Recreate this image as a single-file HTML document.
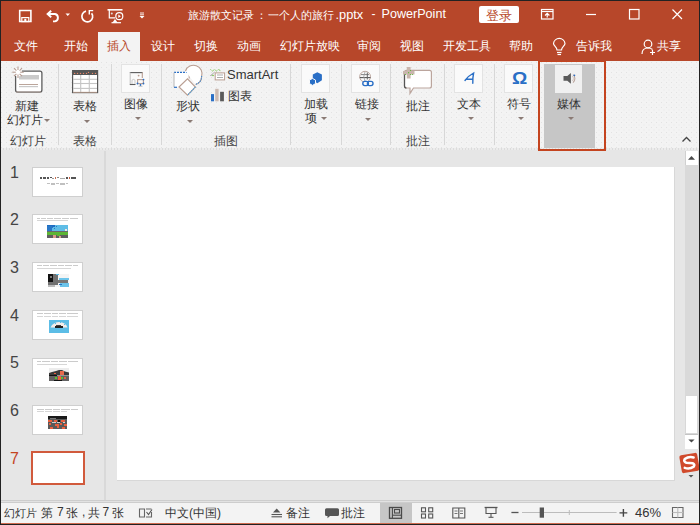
<!DOCTYPE html>
<html><head><meta charset="utf-8">
<style>
*{margin:0;padding:0;box-sizing:border-box}
html,body{width:700px;height:525px;overflow:hidden}
body{position:relative;background:#e6e6e6;font-family:"Liberation Sans",sans-serif;color:#444;font-size:12px}
.a{position:absolute}
#title{left:0;top:0;width:700px;height:61px;background:#b7472a}
#ribbon{left:0;top:61px;width:700px;height:87px;background-color:#f3f3f3;background-image:radial-gradient(circle at 1.5px 1.5px,#e2e2e2 0.6px,transparent 1px),radial-gradient(circle at 1.5px 1.5px,#e6e6e6 0.6px,transparent 1px);background-size:5px 5px,5px 5px;background-position:0 0,2.5px 2.5px}
#rbot{left:0;top:148px;width:700px;height:2px;background:repeating-linear-gradient(90deg,#dcdcdc 0 1.5px,#ececec 1.5px 3px)}
.t{color:#fff;font-size:12px;white-space:nowrap}
.tab{color:#fff;font-size:12px;top:38px;white-space:nowrap}
.sep{width:1px;background:#d7d7d7;top:64px;height:81px}
.ib{background:#fafafa;border:1px solid #e3e3e3;width:29px;height:29px;top:64px}
.lbl{font-size:12px;color:#333;white-space:nowrap}
.glbl{font-size:12px;color:#444;white-space:nowrap;top:132.5px}
.dd{width:0;height:0;border-left:3px solid transparent;border-right:3px solid transparent;border-top:3px solid #8a7a74}
#frameL{left:0;top:0;width:1px;height:525px;background:#222}
#frameR{left:699px;top:0;width:1px;height:525px;background:#222}
#frameT{left:0;top:0;width:700px;height:1px;background:#222}
#frameB{left:0;top:524px;width:700px;height:1px;background:#222}
#panel{left:0;top:151px;width:104px;height:351px;background:#e6e6e6}
#psep{left:104px;top:151px;width:2px;height:349px;background:#d9d9d9}
.thumb{left:32px;width:51px;height:30px;background:#fff;border:1px solid #cfcfcf}
.num{left:10px;font-size:16px;color:#444}
#slide{left:117px;top:167px;width:558px;height:314px;background:#fff;border-right:1px solid #d8d8d8;border-bottom:1px solid #d8d8d8}
#status{left:0;top:502px;width:700px;height:23px;background:#f3f3f3;border-top:1px solid #c6c6c6}
#obot{left:0;top:523px;width:700px;height:1px;background:#cf6a4e}
.st{font-size:12px;color:#333;top:505px;white-space:nowrap}
</style></head><body>
<div id="title" class="a"></div>
<div id="ribbon" class="a"></div>
<div id="rbot" class="a"></div>

<svg class="a" style="left:0;top:0" width="700" height="61" viewBox="0 0 700 61">
<g fill="none" stroke="#fff" stroke-width="1.2">
<!-- save -->
<path d="M19.7 10.5 H30.9 V21.5 H19.7 Z" stroke-width="1.6"/>
<rect x="21.8" y="17.6" width="7" height="4" stroke-width="1.2"/>
<rect x="24.3" y="18.8" width="2" height="2.2" fill="#fff" stroke="none"/>
<!-- undo -->
<path d="M48 14 H55 A3.8 3.8 0 0 1 55 21.4 H53" stroke-width="1.9"/>
<path d="M51.2 10.8 L47.6 14 L51.2 17.2" stroke-width="1.9"/>
<!-- repeat -->
<path d="M86 11.2 A5.4 5.4 0 1 0 91.6 13.2" stroke-width="1.7"/>
<path d="M89.3 14.5 V10.6 H93.2" stroke-width="1.4"/>
<!-- presentation -->
<line x1="107.5" y1="9.8" x2="122.5" y2="9.8" stroke-width="1.6"/>
<path d="M109.3 10 V17.8 H115"/>
<circle cx="119.3" cy="16.2" r="3.5"/>
<path d="M118.3 14.5 L120.8 16.2 L118.3 17.9 Z" fill="#fff" stroke="none"/>
<path d="M112.3 22.8 L115 19 L117.7 22.8 Z" fill="#fff" stroke="none"/>
<line x1="111.5" y1="22.7" x2="121" y2="22.7"/>
<circle cx="111.8" cy="13.5" r="1" fill="#ddd" stroke="none"/>
<!-- ribbon opts -->
<rect x="541.5" y="9.5" width="11.5" height="9.5"/>
<line x1="541.5" y1="11.5" x2="553" y2="11.5"/>
<path d="M547.2 17.5 V13.5 M545 15.5 L547.2 13.3 L549.4 15.5" />
<!-- minimize -->
<line x1="586" y1="14.5" x2="596" y2="14.5"/>
<!-- maximize -->
<rect x="629.5" y="9.5" width="9.5" height="9.5"/>
<!-- close -->
<path d="M672.5 9.5 L682 19 M682 9.5 L672.5 19"/>
<!-- bulb -->
<path d="M557 50 C557 47 553.5 46 553.5 43.5 A5.8 5.8 0 0 1 565 43.5 C565 46 561.5 47 561.5 50 Z"/>
<line x1="557" y1="52.5" x2="561.5" y2="52.5"/>
<line x1="557.5" y1="54.5" x2="561" y2="54.5"/>
<!-- person -->
<circle cx="648" cy="44" r="3.8"/>
<path d="M642 54 C642 50 644.5 48 648 48 C650 48 651.5 48.5 652.5 49.5"/>
<path d="M652.5 50 V55 M650 52.5 H655"/>
</g>
<path d="M65.5 13.6 H70 L67.75 16 Z" fill="#fff"/>
<path d="M140 13 H144 M140 14.8 H144" stroke="#fff" stroke-width="0.9"/>
<path d="M139.5 16 H144.5 L142 18.5 Z" fill="#fff"/>
</svg>
<!-- title text -->
<div class="a t" style="left:188px;top:8px;font-size:11.4px">旅游散文记录</div>
<div class="a t" style="left:256px;top:8px;font-size:11.2px">：</div>
<div class="a t" style="left:268px;top:8px;font-size:11.3px">一个人的旅行</div>
<div class="a t" style="left:335.5px;top:6.5px;font-size:12.8px">.pptx</div>
<div class="a t" style="left:371.5px;top:7px;font-size:12px">-</div>
<div class="a t" style="left:381.5px;top:6.5px;font-size:12.6px">PowerPoint</div>
<div class="a" style="left:479px;top:6px;width:40px;height:17px;background:#fff;border-radius:2px"></div>
<div class="a" style="left:486px;top:7px;color:#b7472a;font-size:13px">登录</div>

<!-- tabs -->
<div class="a tab" style="left:14px">文件</div>
<div class="a tab" style="left:64px">开始</div>
<div class="a" style="left:98px;top:32px;width:42px;height:29px;background:#f3f3f3"></div>
<div class="a tab" style="left:107px;color:#b7472a">插入</div>
<div class="a tab" style="left:151px">设计</div>
<div class="a tab" style="left:194px">切换</div>
<div class="a tab" style="left:237px">动画</div>
<div class="a tab" style="left:280px">幻灯片放映</div>
<div class="a tab" style="left:357px">审阅</div>
<div class="a tab" style="left:400px">视图</div>
<div class="a tab" style="left:443px">开发工具</div>
<div class="a tab" style="left:509px">帮助</div>
<div class="a tab" style="left:576px">告诉我</div>
<div class="a tab" style="left:657px">共享</div>

<!-- ribbon separators -->
<div class="a sep" style="left:58px"></div>
<div class="a sep" style="left:111px"></div>
<div class="a sep" style="left:161px"></div>
<div class="a sep" style="left:290px"></div>
<div class="a sep" style="left:341px"></div>
<div class="a sep" style="left:390px"></div>
<div class="a sep" style="left:444px"></div>
<div class="a sep" style="left:494px"></div>

<!-- media highlight -->
<div class="a" style="left:538px;top:61px;width:68px;height:90px;border:2.5px solid #c4441f;border-top:1.5px solid #c4441f"></div>
<div class="a" style="left:544px;top:64px;width:51px;height:84px;background:#c6c6c6"></div>

<!-- icon boxes -->
<div class="a ib" style="left:121px"></div>
<div class="a ib" style="left:301px"></div>
<div class="a ib" style="left:351px"></div>
<div class="a ib" style="left:454px"></div>
<div class="a ib" style="left:504px"></div>
<div class="a ib" style="left:555px;width:27px;top:64.5px;height:28px;background:#f0f0f0;border:none"></div>

<svg class="a" style="left:0;top:0" width="700" height="150" viewBox="0 0 700 150">
<!-- new slide -->
<rect x="15.6" y="71.1" width="26.3" height="21" rx="2" fill="#fff" stroke="#5c5c5c" stroke-width="1.3"/>
<rect x="19" y="75" width="20" height="4.5" fill="#cacaca"/>
<line x1="19" y1="84.5" x2="38" y2="84.5" stroke="#bba59b" stroke-width="1"/>
<line x1="19" y1="86.7" x2="38" y2="86.7" stroke="#bdbdbd" stroke-width="1"/>
<line x1="16" y1="92" x2="41" y2="92" stroke="#b9a59d" stroke-width="0.8"/>
<circle cx="18" cy="72.2" r="4.2" fill="#fff"/>
<g stroke="#b59b91" stroke-width="1.1">
<line x1="18" y1="66.5" x2="18" y2="70"/><line x1="18" y1="74.5" x2="18" y2="78"/>
<line x1="12.3" y1="72.2" x2="15.8" y2="72.2"/><line x1="20.2" y1="72.2" x2="23.7" y2="72.2"/>
<line x1="14" y1="68.2" x2="16.4" y2="70.6"/><line x1="19.6" y1="73.8" x2="22" y2="76.2"/>
<line x1="22" y1="68.2" x2="19.6" y2="70.6"/><line x1="16.4" y1="73.8" x2="14" y2="76.2"/>
</g>
<!-- table -->
<rect x="72.6" y="70.6" width="25" height="22" fill="#fff" stroke="#595959" stroke-width="1.2"/>
<rect x="72.6" y="70.2" width="25" height="4.8" fill="#565656"/>
<g fill="#e8876a"><circle cx="74.6" cy="73.4" r=".7"/><circle cx="77.5" cy="73.4" r=".7"/><circle cx="80.5" cy="73.4" r=".7"/><circle cx="83.5" cy="73.4" r=".7"/><circle cx="86.5" cy="73.4" r=".7"/><circle cx="88.5" cy="72.4" r=".7"/><circle cx="92.5" cy="73.4" r=".7"/><circle cx="95.5" cy="73.4" r=".7"/></g>
<g stroke="#c4c4c4" stroke-width="1.1"><line x1="80.7" y1="75" x2="80.7" y2="92"/><line x1="89.3" y1="75" x2="89.3" y2="92"/>
<line x1="73" y1="79.3" x2="97" y2="79.3"/><line x1="73" y1="83.5" x2="97" y2="83.5"/><line x1="73" y1="88.4" x2="97" y2="88.4"/></g>
<line x1="73" y1="92.3" x2="97" y2="92.3" stroke="#c9a999" stroke-width="0.8"/>
<!-- image -->
<g fill="none" stroke-width="1.1">
<line x1="129.8" y1="72.6" x2="142.6" y2="72.6" stroke="#5a5a5a"/>
<line x1="130.2" y1="72.6" x2="130.2" y2="84.4" stroke="#c4c4c4"/>
<line x1="129.8" y1="84.5" x2="135.5" y2="84.5" stroke="#5a5a5a"/>
<line x1="142.3" y1="72.6" x2="142.3" y2="78" stroke="#b99e92"/>
<rect x="137.6" y="79.6" width="5.8" height="4" stroke="#b99e92"/>
<path d="M132 84 V80.5 Q133.5 78 135 80.5 V84" stroke="#cfcfcf"/>
</g>
<circle cx="138.6" cy="75.6" r="0.9" fill="#b99e92"/>
<g fill="#2a6fc6"><circle cx="143.5" cy="79.6" r=".9"/><circle cx="137.5" cy="83.5" r=".9"/><circle cx="143.5" cy="83.5" r=".9"/><rect x="139.8" y="84" width="1.4" height="2"/></g>
<line x1="138.5" y1="86.3" x2="142.5" y2="86.3" stroke="#bbb" stroke-width=".9"/>
<!-- shapes -->
<rect x="173.9" y="72.4" width="15.3" height="15" fill="#fff"/>
<line x1="174" y1="72.4" x2="189.2" y2="72.4" stroke="#2a6fc6" stroke-width="1.2" stroke-dasharray="2 1"/>
<line x1="174" y1="72.4" x2="174" y2="87.2" stroke="#c2c2c2" stroke-width="1.2"/>
<line x1="174" y1="87.3" x2="177" y2="87.3" stroke="#2a6fc6" stroke-width="1.2"/>
<line x1="189.2" y1="72.4" x2="189.2" y2="78.6" stroke="#b99e92" stroke-width="1.1"/>
<path d="M185.5 71 A8.4 8.4 0 0 1 201.6 76.5 A8.4 8.4 0 0 1 195.5 84.5" fill="#fff" stroke="#b99e92" stroke-width="1.1"/>
<path d="M201.6 76 A8.4 8.4 0 0 1 195.5 84.5" fill="none" stroke="#3a8ad6" stroke-width="1.1" stroke-dasharray="1.3 1"/>
<path d="M179 87 L187.5 78.8 L195.4 87 L187.5 95.2 Z" fill="#fff" stroke="#b99e92" stroke-width="1.1"/>
<line x1="195.4" y1="87" x2="187.5" y2="95.2" stroke="#45a0e0" stroke-width="1.1" stroke-dasharray="1.3 1"/>
<!-- smartart -->
<path d="M210.5 69.5 L212.5 71 L214.5 69.5 L216.5 71 L218.5 69.5 L221 71" fill="none" stroke="#6dbb3a" stroke-width="1" stroke-dasharray="1 .8"/>
<line x1="210.5" y1="76" x2="214.5" y2="72" stroke="#666" stroke-width=".9" stroke-dasharray="1.2 .6"/>
<circle cx="213" cy="75.5" r=".8" fill="#6dbb3a"/>
<rect x="215.2" y="72.9" width="9.4" height="7" fill="#fff" stroke="#b99e92" stroke-width="1"/>
<line x1="217" y1="75" x2="223" y2="75" stroke="#999" stroke-width=".8"/>
<line x1="217" y1="77.5" x2="223" y2="77.5" stroke="#999" stroke-width=".8"/>
<!-- chart -->
<rect x="211" y="94.1" width="3" height="7.2" fill="#2a6fc6"/>
<rect x="215.2" y="88.8" width="3.4" height="12.5" fill="#cdbbb2"/>
<rect x="220.1" y="91.8" width="3.8" height="9.5" fill="#5a5a5a"/>
<!-- addin -->
<path d="M317.3 72.3 L321.9 74.6 V80.3 L317.3 83.2 L312.8 80.3 V74.6 Z" fill="#2a6fc6"/>
<path d="M312.5 78.4 L315.5 80.1 V83.6 L312.5 85.4 L309.5 83.6 V80.1 Z" fill="#2a6fc6" stroke="#fafafa" stroke-width="1"/>
<!-- link -->
<circle cx="365.1" cy="76.7" r="5.4" fill="none" stroke="#bba59d" stroke-width="1"/>
<line x1="359.8" y1="77.6" x2="370.5" y2="77.6" stroke="#555" stroke-width="1.1"/>
<line x1="361" y1="74.6" x2="369" y2="74.6" stroke="#777" stroke-width=".9"/>
<line x1="367.3" y1="72.5" x2="367.3" y2="79.5" stroke="#666" stroke-width="1"/>
<path d="M365 72 Q362.5 76.7 365 81" fill="none" stroke="#999" stroke-width=".8"/>
<rect x="362.8" y="81.4" width="5.6" height="4.2" rx="2" fill="#fafafa" stroke="#2a6fc6" stroke-width="1.4"/>
<rect x="367.4" y="81.4" width="5.6" height="4.2" rx="2" fill="none" stroke="#2a6fc6" stroke-width="1.4"/>
<!-- comment -->
<path d="M406.5 70.3 H429.5 Q431.4 70.3 431.4 72.3 V86 Q431.4 88 429.5 88 H413.5 L410 93.4 L410 88 H406.5 Q404.5 88 404.5 86 V72.3 Q404.5 70.3 406.5 70.3 Z" fill="#fff" stroke="#bba59d" stroke-width="1.2"/>
<path d="M404.5 74 V86 Q404.5 88 406.5 88" fill="none" stroke="#555" stroke-width="1.2"/>
<path d="M406.8 67 H410.6 V70.9 H414.5 V74.6 H410.6 V78.5 H406.8 V74.6 H403 V70.9 H406.8 Z" fill="#c9b6ad"/>
<g fill="#5ab833"><circle cx="408.6" cy="72.7" r=".6"/><circle cx="405.5" cy="74.5" r=".6"/><circle cx="410.5" cy="74.5" r=".6"/><circle cx="412.5" cy="74.5" r=".6"/><circle cx="410.5" cy="70.5" r=".6"/></g>
<!-- text A -->
<path d="M465 80.5 Q468 76 473.6 73 Q472.6 78 472.8 83.2 M467 79.2 H472.6" fill="none" stroke="#2a6fc6" stroke-width="1.4" stroke-linecap="round"/>
<!-- speaker -->
<path d="M563.5 76 H567.3 L570.9 73 V83.7 L567.3 80.8 H563.5 Z" fill="#5a5a5a"/>
<path d="M573 74.6 A5.2 5.2 0 0 1 573 82.6" fill="none" stroke="#bba59d" stroke-width="1.1"/><path d="M572.3 76.2 A3.2 3.2 0 0 1 572.3 81" fill="none" stroke="#cfc2bc" stroke-width=".9"/>
<circle cx="574.4" cy="75.3" r=".9" fill="#2a6fc6"/>
</svg>
<div class="a" style="left:512px;top:69px;font-size:17px;font-weight:bold;transform:scaleX(1.12);transform-origin:0 0;color:#2a6fc6;font-family:'Liberation Sans',sans-serif">&#937;</div>
<!-- dropdowns -->
<div class="a dd" style="left:44px;top:119px"></div>
<div class="a dd" style="left:84px;top:120px"></div>
<div class="a dd" style="left:135px;top:117px"></div>
<div class="a dd" style="left:187px;top:120px"></div>
<div class="a dd" style="left:321px;top:117px"></div>
<div class="a dd" style="left:365px;top:118px"></div>
<div class="a dd" style="left:468px;top:117px"></div>
<div class="a dd" style="left:518px;top:117px"></div>
<div class="a dd" style="left:568px;top:117px"></div>
<svg class="a" style="left:680px;top:134px" width="14" height="10"><path d="M2.5 7.5 L6.5 3.5 L10.5 7.5" fill="none" stroke="#444" stroke-width="1.3"/></svg>
<!-- labels -->
<div class="a lbl" style="left:15px;top:98px">新建</div>
<div class="a lbl" style="left:7px;top:112px">幻灯片</div>
<div class="a glbl" style="left:10px">幻灯片</div>
<div class="a lbl" style="left:73px;top:98px">表格</div>
<div class="a glbl" style="left:73px">表格</div>
<div class="a lbl" style="left:124px;top:96px">图像</div>
<div class="a lbl" style="left:176px;top:98px">形状</div>
<div class="a lbl" style="left:227px;top:67px;font-size:13px">SmartArt</div>
<div class="a lbl" style="left:228px;top:88px">图表</div>
<div class="a glbl" style="left:214px">插图</div>
<div class="a lbl" style="left:304px;top:96px">加载</div>
<div class="a lbl" style="left:305px;top:110px">项</div>
<div class="a lbl" style="left:355px;top:96px">链接</div>
<div class="a lbl" style="left:406px;top:98px">批注</div>
<div class="a glbl" style="left:406px">批注</div>
<div class="a lbl" style="left:457px;top:96px">文本</div>
<div class="a lbl" style="left:507px;top:96px">符号</div>
<div class="a lbl" style="left:557px;top:96px">媒体</div>

<!-- slide panel -->
<div id="psep" class="a"></div>
<div class="a num" style="top:164px">1</div>
<div class="a thumb" style="top:167px"></div>
<div class="a num" style="top:211px">2</div>
<div class="a thumb" style="top:214px"></div>
<div class="a num" style="top:259px">3</div>
<div class="a thumb" style="top:262px"></div>
<div class="a num" style="top:306.5px">4</div>
<div class="a thumb" style="top:310px"></div>
<div class="a num" style="top:354px">5</div>
<div class="a thumb" style="top:357.5px"></div>
<div class="a num" style="top:402px">6</div>
<div class="a thumb" style="top:405px"></div>
<div class="a num" style="top:449.5px;color:#c4441f">7</div>
<div class="a" style="left:30.5px;top:451px;width:54px;height:34px;background:#fff;border:2.5px solid #d15a3c"></div>
<svg class="a" style="left:0;top:0" width="100" height="450" viewBox="0 0 100 450" shape-rendering="crispEdges">
<!-- thumb1 text -->
<g fill="#555"><rect x="40" y="177" width="2" height="2"/><rect x="43" y="177" width="3" height="2"/><rect x="47" y="177" width="2" height="2"/><rect x="50" y="177" width="2" height="1"/><rect x="52" y="178" width="2" height="1" fill="#999"/><rect x="54.5" y="177" width="1.5" height="2" fill="#d07050"/><rect x="57" y="177" width="2" height="1" fill="#888"/><rect x="60" y="178" width="5" height="1" fill="#aaa"/><rect x="66" y="177" width="2" height="2"/><rect x="68.5" y="177" width="1.5" height="2" fill="#c85a3c"/><rect x="70.5" y="177" width="2" height="2"/><rect x="73" y="177" width="2.5" height="2"/></g>
<g fill="#c0c0c0"><rect x="47" y="183" width="3" height="1"/><rect x="51" y="183" width="4" height="1.5"/><rect x="56" y="183" width="3" height="1"/><rect x="60" y="183" width="5" height="1.5"/><rect x="66" y="183" width="2" height="1"/></g>
<!-- text lines thumbs 2-6 -->
<g fill="#cbcbcb">
<rect x="37" y="217.7" width="41" height="1.2"/><rect x="37" y="220.2" width="31" height="1" fill="#d6d6d6"/>
<rect x="37" y="265" width="41" height="1.2"/><rect x="37" y="267.5" width="34" height="1" fill="#d6d6d6"/>
<rect x="37" y="313" width="41" height="1.2"/><rect x="37" y="315.8" width="41" height="1" fill="#d6d6d6"/>
<rect x="37" y="361" width="41" height="1.2"/><rect x="37" y="363.6" width="30" height="1" fill="#d6d6d6"/>
<rect x="37" y="408.7" width="41" height="1.2"/><rect x="37" y="411.2" width="30" height="1" fill="#d6d6d6"/>
</g>
<g fill="#fff"><rect x="40" y="217" width="1" height="3"/><rect x="46" y="217" width="1" height="3"/><rect x="53" y="217" width="1" height="3"/><rect x="61" y="217" width="1" height="3"/><rect x="69" y="217" width="1" height="3"/>
<rect x="42" y="264" width="1" height="3"/><rect x="49" y="264" width="1" height="3"/><rect x="57" y="264" width="1" height="3"/><rect x="64" y="264" width="1" height="3"/><rect x="72" y="264" width="1" height="3"/>
<rect x="43" y="312" width="1" height="5"/><rect x="51" y="312" width="1" height="5"/><rect x="58" y="312" width="1" height="5"/><rect x="66" y="312" width="1" height="5"/>
<rect x="41" y="360" width="1" height="4"/><rect x="50" y="360" width="1" height="4"/><rect x="58" y="360" width="1" height="4"/><rect x="67" y="360" width="1" height="4"/>
<rect x="44" y="408" width="1" height="4"/><rect x="52" y="408" width="1" height="4"/><rect x="60" y="408" width="1" height="4"/><rect x="70" y="408" width="1" height="4"/></g>
<!-- thumb2 image -->
<rect x="47" y="225" width="21" height="6.5" fill="#5fbde6"/>
<rect x="47" y="225" width="8" height="1.5" fill="#1f6ec2"/>
<rect x="47" y="226" width="5" height="4.5" fill="#2a78c8"/>
<rect x="52" y="227" width="1" height="1" fill="#2a78c8"/><rect x="54" y="228" width="1" height="1" fill="#2a78c8"/><rect x="56" y="226" width="1" height="1" fill="#2a78c8"/>
<rect x="47" y="231" width="21" height="1" fill="#6a6a6a"/>
<rect x="47" y="232" width="21" height="3" fill="#5cb634"/>
<rect x="47" y="235" width="21" height="3" fill="#5e5e5e"/>
<rect x="53" y="235" width="3" height="3" fill="#d89a88"/><rect x="57" y="234" width="3" height="2" fill="#5cb634"/><rect x="59" y="236" width="2" height="2" fill="#d8a090"/>
<rect x="65" y="229" width="2" height="2" fill="#f0e8e4"/>
<!-- thumb3 image -->
<rect x="48" y="273.6" width="21" height="13" fill="#f4f4f4"/>
<rect x="48" y="274" width="10" height="11" fill="#707070"/>
<rect x="48" y="274" width="4.5" height="7.5" fill="#111"/>
<rect x="50" y="276" width="1.5" height="2" fill="#777"/>
<rect x="58" y="280" width="10" height="2.5" fill="#777"/>
<rect x="56" y="274" width="3" height="1.2" fill="#5cbde8"/>
<rect x="59" y="277.5" width="10" height="2" fill="#6cc4ea"/>
<rect x="60" y="283" width="9" height="3.5" fill="#6cc4ea"/>
<rect x="59" y="283.5" width="3" height="1.5" fill="#2a70c0"/>
<rect x="48" y="285" width="7" height="1.6" fill="#bbb"/>
<!-- thumb4 image -->
<rect x="48.7" y="320.2" width="20.6" height="12.9" fill="#5cbde6"/>
<path d="M50.5 327.5 L52 325 L54 323.5 L56 322.5 L59 322 L62 322.5 L64.5 323.5 L66.5 325.5 L67.5 327.5 Z" fill="#f4ece8" shape-rendering="auto"/>
<rect x="54.5" y="325.8" width="8.5" height="2.2" fill="#222"/>
<rect x="56" y="325" width="5" height="1" fill="#444"/>
<rect x="52" y="323" width="1" height="1" fill="#5cbde6"/><rect x="55" y="322.5" width="1" height="1" fill="#5cbde6"/><rect x="60" y="322.3" width="1" height="1" fill="#5cbde6"/><rect x="64" y="323.5" width="1" height="1" fill="#5cbde6"/>
<!-- thumb5 image -->
<rect x="49" y="368" width="20" height="13" fill="#ececec"/>
<path d="M52 372 L56 371 L59 370 L62 370 L65 371.5 L69 372.5 V375.5 H49 V373 Z" fill="#3a3a3a" shape-rendering="auto"/>
<rect x="49" y="375.5" width="20" height="5.5" fill="#626262"/>
<rect x="49" y="375" width="8" height="1" fill="#111"/>
<rect x="60" y="371" width="4" height="4" fill="#e86a4c"/><rect x="58" y="375.5" width="3" height="4" fill="#e8603f"/>
<rect x="54" y="373" width="2" height="1" fill="#e8603f"/><rect x="64" y="377" width="2" height="1.5" fill="#e8603f"/>
<rect x="55" y="377" width="1.5" height="1.5" fill="#5cc02c"/><rect x="61" y="377" width="1.5" height="1.5" fill="#5cc02c"/>
<rect x="54" y="379.5" width="8" height="1.5" fill="#111"/>
<!-- thumb6 image -->
<rect x="48" y="416" width="19.4" height="13" fill="#595959"/>
<rect x="48" y="416" width="19.4" height="3" fill="#1a1a1a"/>
<rect x="50" y="418" width="6" height="1" fill="#777"/>
<g fill="#e8603f"><rect x="48" y="419.5" width="4" height="2"/><rect x="54" y="420" width="3" height="1.5"/><rect x="61" y="420" width="4" height="2"/><rect x="49" y="423" width="2" height="2"/><rect x="55" y="424" width="4" height="1.5"/><rect x="60" y="423" width="2" height="2"/><rect x="64" y="424" width="3" height="2"/><rect x="50" y="426.5" width="3" height="2"/><rect x="57" y="426" width="2" height="2"/><rect x="62" y="427" width="3" height="2"/></g>
<g fill="#cfcfcf"><rect x="52" y="422" width="4" height="1"/><rect x="57" y="422" width="3" height="1"/><rect x="63" y="422" width="2" height="1"/></g>
<rect x="58" y="420" width="2" height="1.5" fill="#111"/>
</svg>

<!-- slide -->
<div id="slide" class="a"></div>

<!-- scrollbar -->
<div class="a" style="left:684.5px;top:151px;width:14.5px;height:298px;background:#d9d9d9"></div>
<div class="a" style="left:684.5px;top:151px;width:13.5px;height:13.5px;background:#fff;border-left:1px solid #d0d0d0"></div>
<div class="a" style="left:684.5px;top:395px;width:13.5px;height:38.5px;background:#fff;border:1px solid #d8d8d8"></div>
<div class="a" style="left:684.5px;top:434px;width:13.5px;height:14.5px;background:#fff;border-top:1.5px solid #c4c4c4"></div>
<svg class="a" style="left:676px;top:146px" width="24" height="340" viewBox="676 146 24 340">
<path d="M688 159.7 L691.5 156 L695 159.7 Z" fill="#4a4a4a"/>
<path d="M688.3 439.4 L694.6 439.4 L691.45 442.6 Z" fill="#4a4a4a"/>
<path d="M688.5 475 L693.5 475 L691 477.5 Z" fill="#555"/>
<g transform="rotate(-10 689.5 463)">
<rect x="680.5" y="454" width="18" height="18" rx="2" fill="#d04a2c"/>
<path d="M694.5 458.2 Q690 456 685.5 458.3 Q683.6 460.5 686.5 462.3 L692.5 463.8 Q695 465.3 693 467.3 Q688.5 469.5 684 467" fill="none" stroke="#fff" stroke-width="2.6" stroke-linecap="round"/>
</g>
</svg>
<!-- status -->
<div class="a" style="left:0;top:500px;width:700px;height:1px;background:#cdcdcd"></div>
<div class="a" style="left:0;top:501px;width:700px;height:1px;background:#e2e2e2"></div>
<div class="a" style="left:0;top:502px;width:700px;height:1px;background:#cdcdcd"></div>
<div class="a" style="left:0;top:503px;width:700px;height:20px;background:#f3f3f3"></div>
<div id="obot" class="a"></div>
<div class="a st" style="left:4px;font-size:11.4px;top:505.5px">幻灯片</div>
<div class="a st" style="left:41px">第</div>
<div class="a st" style="left:57px">7</div>
<div class="a st" style="left:65.5px">张</div>
<div class="a st" style="left:82px">,</div>
<div class="a st" style="left:88px">共</div>
<div class="a st" style="left:102.5px">7</div>
<div class="a st" style="left:112px">张</div>
<div class="a st" style="left:165px">中文(中国)</div>
<div class="a st" style="left:286px">备注</div>
<div class="a st" style="left:341px">批注</div>
<div class="a" style="left:380px;top:503px;width:32px;height:20px;background:#c6c6c6"></div>
<div class="a st" style="left:635px;font-size:13px">46%</div>
<svg class="a" style="left:0;top:495px" width="700" height="30" viewBox="0 495 700 30">
<g fill="none" stroke="#555" stroke-width="1.1">
<!-- spell -->
<path d="M139.5 509 H144.5 V517 H139.5 Z" stroke="#666"/>
<path d="M146 509 H151.5 M151.5 512 V517 H146" stroke="#666"/>
<path d="M146.5 512 L148.5 514.5 L152 509.5" stroke="#555"/>
<!-- notes -->
<path d="M273 512.5 L276.7 508.6 L280.4 512.5 Z" fill="#555" stroke="none"/>
<line x1="271.5" y1="514.5" x2="282" y2="514.5"/>
<line x1="271.5" y1="516.8" x2="282" y2="516.8"/>
<!-- normal view -->
<rect x="389.5" y="507.5" width="12" height="10.8" stroke="#4a4a4a" stroke-width="1.3"/>
<line x1="392.4" y1="508" x2="392.4" y2="518" stroke="#4a4a4a"/>
<rect x="394.5" y="509.5" width="5" height="3.5" stroke="#4a4a4a"/>
<line x1="392.5" y1="515.2" x2="401" y2="515.2" stroke="#4a4a4a"/>
<!-- sorter -->
<rect x="421.5" y="507.8" width="4" height="4" /><rect x="428.7" y="507.8" width="4" height="4"/>
<rect x="421.5" y="514" width="4" height="4" /><rect x="428.7" y="514" width="4" height="4"/>
<!-- reading -->
<path d="M452.8 508 H464.8 V518 H452.8 Z"/>
<line x1="458.8" y1="508" x2="458.8" y2="518"/>
<line x1="454.5" y1="511" x2="457.5" y2="511" stroke-width=".8"/><line x1="454.5" y1="513.5" x2="457.5" y2="513.5" stroke-width=".8"/>
<line x1="460" y1="511" x2="463" y2="511" stroke-width=".8"/><line x1="460" y1="513.5" x2="463" y2="513.5" stroke-width=".8"/>
<!-- slideshow -->
<line x1="484.6" y1="507.5" x2="497.5" y2="507.5" stroke-width="1.3"/>
<path d="M486 508 V513.5 H496 V508"/>
<line x1="491" y1="513.5" x2="491" y2="517"/>
<line x1="488.5" y1="517.3" x2="493.5" y2="517.3"/>
<!-- fit -->
<path d="M672.5 507.5 H683 V517.5 H672.5 Z" stroke="#666"/>
<line x1="677.8" y1="507.5" x2="677.8" y2="517.5" stroke="#bbb"/>
<line x1="672.5" y1="512.5" x2="683" y2="512.5" stroke="#bbb"/>
</g>
<!-- comment bubble -->
<path d="M326.5 508.2 H337.5 Q339 508.2 339 509.7 V514.5 Q339 516 337.5 516 H330 L327.5 518.3 V516 H326.5 Q325 516 325 514.5 V509.7 Q325 508.2 326.5 508.2 Z" fill="#555"/>
<!-- zoom slider -->
<line x1="511.4" y1="512.5" x2="518.5" y2="512.5" stroke="#555" stroke-width="1.3"/>
<line x1="522" y1="512.5" x2="616.6" y2="512.5" stroke="#bcbcbc" stroke-width="1"/>
<line x1="569.3" y1="510" x2="569.3" y2="515" stroke="#bcbcbc" stroke-width="1"/>
<rect x="539.7" y="507.5" width="4.3" height="10.2" fill="#555"/>
<path d="M619.5 512.9 H627.3 M623.4 509 V516.8" stroke="#444" stroke-width="1.4"/>
</svg>
<div id="frameL" class="a"></div>
<div id="frameR" class="a"></div>
<div id="frameT" class="a"></div>
<div id="frameB" class="a"></div>
</body></html>
